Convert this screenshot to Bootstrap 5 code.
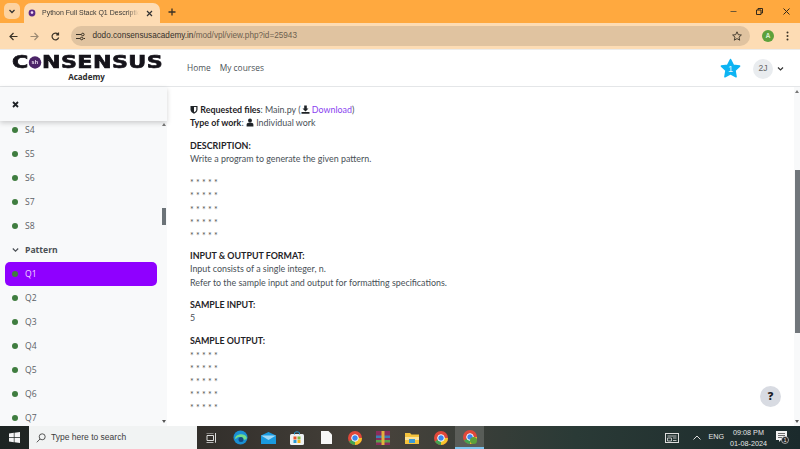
<!DOCTYPE html>
<html lang="en">
<head>
  <meta charset="UTF-8">
  <meta name="viewport" content="width=device-width, initial-scale=1">
  <title>Python Full Stack Q1 Description</title>
  <link href="https://cdn.jsdelivr.net/npm/bootstrap@5.3.3/dist/css/bootstrap.min.css" rel="stylesheet">
  <style>
    html, body { height: 449px; overflow: hidden; }
    body { font-family: "Open Sans", "Noto Sans", sans-serif; color: #3f4449; background: #fff; }
    svg { display: block; flex: none; }

    .app-shell { width: 800px; height: 449px; }

    .tab-strip { height: 23px; background: #ffa93f; padding-left: 4px; }
    .tab-list-btn { width: 16px; height: 16px; background: #fdd3a0; border-radius: 5px; margin-right: 4px; margin-top: 3px; }
    .chrome-tab { width: 136px; height: 20px; margin-top: 3px; background: #fddcb4; border-radius: 7px 7px 0 0; padding: 0 7px 0 4px; font-size: 7px; color: #3b3a38; white-space: nowrap; font-family: "Liberation Sans", sans-serif; }
    .tab-title { width: 97px; margin-left: 6px; overflow: visible; -webkit-mask-image: linear-gradient(90deg, #000 88%, transparent 100%); mask-image: linear-gradient(90deg, #000 88%, transparent 100%); }
    .win-btns { margin-left: auto; gap: 19.5px; padding-right: 10.5px; height: 23px; }

    .tool-strip { height: 27px; background: #fddcb4; padding: 0 11px 0 8.5px; border-bottom: 1px solid #ececec; gap: 12px; }
    .url-pill { width: 679px; height: 20px; background: #e0c3a0; border-radius: 10px; margin-left: -1px; padding: 0 8px 0 5px; font-size: 8.2px; font-family: "Liberation Sans", sans-serif; color: #6d5f4f; }
    .url-host { color: #35302a; }
    .avatar-a { width: 12px; height: 12px; border-radius: 50%; background: #5da13a; color: #d8efcf; font-size: 6.5px; font-weight: 700; }

    .site-nav { height: 37px; border-bottom: 1px solid #e4e6e8; padding: 1px 16px 0 0; background: #fff; }
    .logo-box { width: 187px; padding-left: 12px; }
    .logo-word { font-family: "DejaVu Sans", sans-serif; font-weight: 700; font-size: 17.6px; line-height: 15px; color: #15131a; -webkit-text-stroke: .7px #15131a; letter-spacing: .35px; transform: scaleX(1.26); transform-origin: left; white-space: nowrap; }
    .logo-sub { width: 149px; font-size: 8px; font-weight: 700; line-height: 11px; color: #2b2b2b; text-align: center; margin-top: 1px; }
    .nav-text { font-size: 8.4px; color: #4c5257; margin-right: 9px; }
    .user-chip { width: 20px; height: 20px; border-radius: 50%; background: #e9ecef; font-family: "Liberation Sans", sans-serif; font-size: 8.5px; color: #666; margin: 0 4px 0 12.5px; }

    .page-body { height: 339px; }
    .side-col { width: 167px; background: #f8f9fa; position: relative; }
    .side-head { height: 34px; background: #f8f9fa; padding-left: 12px; box-shadow: 0 2px 5px rgba(0,0,0,.18); position: relative; z-index: 2; }
    .side-list { padding: 0 10px 0 5px; margin-top: -3px; overflow: hidden; height: 308px; }
    .side-row { height: 24px; font-size: 8.6px; color: #5b6166; padding-left: 7px; border-radius: 5px; }
    .dot-done { width: 6px; height: 6px; border-radius: 50%; background: #3f7d3f; margin-right: 7px; }
    .chev-ico { margin-right: 6px; }
    .side-row.is-active { background: #8f00ff; color: #f3d9ff; }
    .side-row.is-section { font-weight: 700; color: #4a4f54; }
    .side-thumb { position: absolute; left: 162px; top: 121px; width: 4px; height: 17px; background: #6c7378; }
    .side-arrow-up { position: absolute; left: 162px; top: 36px; }
    .side-arrow-down { position: absolute; left: 162px; top: 333px; }

    .content-col { padding: 16px 0 0 23px; font-family: Lato, "Open Sans", sans-serif; font-size: 8.9px; line-height: 13.100px; color: #495057; position: relative; overflow: hidden; }
    .content-col b { color: #1f2327; font-weight: 700; }
    .content-col p { margin: 0; }
    .content-col .gap-after { margin-bottom: 9.500px; }
    .star-line { font-size: 8.800px; height: 13.100px; line-height: 18px; color: #555; }
    .dl-link { color: #8a3ff0; text-decoration: none; }
    .inline-ico { display: inline-block; vertical-align: -1px; }
    .page-bar { width: 6px; background: #f8f9fa; position: relative; }
    .page-thumb { position: absolute; left: .5px; top: 83px; width: 5px; height: 163px; background: #71767b; }
    .page-arrow-up { position: absolute; left: 1px; top: 3px; }
    .page-arrow-down { position: absolute; left: 1px; top: 333px; }
    .help-btn { position: absolute; left: 760px; top: 386px; width: 21px; height: 21px; border-radius: 50%; background: #d8dbe2; color: #1d2125; font-size: 11px; font-weight: 800; z-index: 3; }

    .task-strip { height: 23px; background: linear-gradient(90deg, #1d2422 0%, #322f2b 25%, #47423b 48%, #2a3a36 72%, #1b2a2c 100%); color: #e6e6e6; }
    .start-cell { width: 29px; }
    .search-box { width: 168px; height: 23px; background: #f1f3f3; color: #3c3c3c; font-size: 8.5px; padding-left: 7px; font-family: "Liberation Sans", sans-serif; }
    .search-ico { margin-right: 5px; }
    .task-cell { width: 28.700px; height: 23px; }
    .task-cell.is-open { background: rgba(255,255,255,.16); border-bottom: 2px solid #7dc3ee; }
    .tray-cell { font-family: "Liberation Sans", sans-serif; font-size: 7.200px; padding-right: 11px; }
    .news-ico { margin-right: 14px; }
    .up-ico { margin-right: 7.500px; }
    .clock-cell { text-align: center; line-height: 11px; width: 44px; font-size: 7.200px; margin: 0 5.500px 0 2.500px; }
  </style>
</head>
<body>
  <div class="app-shell d-flex flex-column position-relative">

    <div class="tab-strip d-flex align-items-start">
      <div class="tab-list-btn d-flex align-items-center justify-content-center">
        <svg width="8" height="8" viewBox="0 0 8 8"><path d="M1.500 3 4 5.500 6.500 3" fill="none" stroke="#333" stroke-width="1.300"/></svg>
      </div>
      <div class="chrome-tab d-flex align-items-center">
        <svg width="8" height="8" viewBox="0 0 8 8"><circle cx="4" cy="4" r="3.400" fill="#5b2a86"/><circle cx="4" cy="3.600" r="1.300" fill="#f2d9f2"/></svg>
        <div class="tab-title">Python Full Stack Q1 Descriptio</div>
        <svg class="ms-auto" width="7" height="7" viewBox="0 0 7 7"><path d="M1 1l5 5M6 1 1 6" stroke="#333" stroke-width="1.200"/></svg>
      </div>
      <svg class="ms-2 mt-2" width="8" height="8" viewBox="0 0 8 8"><path d="M4 .5v7M.5 4h7" stroke="#3a3226" stroke-width="1.300"/></svg>
      <div class="win-btns d-flex align-items-center">
        <svg width="7" height="7" viewBox="0 0 7 7"><path d="M.5 3.500h6" stroke="#6b5636"/></svg>
        <svg width="7" height="7" viewBox="0 0 7 7"><path d="M.5 2h4.500v4.500h-4.500zM2 2V.5h4.500V5H5" fill="none" stroke="#33291a"/></svg>
        <svg width="7" height="7" viewBox="0 0 7 7"><path d="M.5.5l6 6M6.500.5l-6 6" stroke="#33291a"/></svg>
      </div>
    </div>

    <div class="tool-strip d-flex align-items-center">
      <svg width="9" height="9" viewBox="0 0 9 9"><path d="M8.500 4.500H1M4.500 1 1 4.500 4.500 8" fill="none" stroke="#3a3226" stroke-width="1.200"/></svg>
      <svg width="9" height="9" viewBox="0 0 9 9"><path d="M.5 4.500H8M4.500 1 8 4.500 4.500 8" fill="none" stroke="#9c8a73" stroke-width="1.200"/></svg>
      <svg width="9" height="9" viewBox="0 0 9 9"><path d="M7.700 5.500A3.400 3.400 0 1 1 7 2.200M7.500.6v2.300H5.200" fill="none" stroke="#3a3226" stroke-width="1.200"/></svg>
      <div class="url-pill d-flex align-items-center">
        <svg class="me-2" width="9" height="9" viewBox="0 0 9 9"><path d="M0 2.500h5M7.500 6.500h1.500M0 6.500h4" stroke="#3a3226"/><circle cx="6.800" cy="2.500" r="1.300" fill="none" stroke="#3a3226"/><circle cx="5.700" cy="6.500" r="1.300" fill="none" stroke="#3a3226"/></svg>
        <span><span class="url-host">dodo.consensusacademy.in</span>/mod/vpl/view.php?id=25943</span>
        <svg class="ms-auto" width="10" height="10" viewBox="0 0 10 10"><path d="M5 .8 6.300 3.700 9.400 4 7 6.100 7.700 9.200 5 7.600 2.300 9.200 3 6.100.6 4 3.700 3.700z" fill="none" stroke="#3a3226" stroke-width=".9"/></svg>
      </div>
      <div class="avatar-a d-flex align-items-center justify-content-center ms-auto">A</div>
      <svg width="3" height="10" viewBox="0 0 3 10"><circle cx="1.500" cy="1.500" r="1" fill="#3a3226"/><circle cx="1.500" cy="5" r="1" fill="#3a3226"/><circle cx="1.500" cy="8.500" r="1" fill="#3a3226"/></svg>
    </div>

    <nav class="site-nav d-flex align-items-center">
      <div class="logo-box">
        <div class="logo-word d-flex align-items-center">C<svg width="10.500" height="13" viewBox="0 0 16 16" preserveAspectRatio="none"><circle cx="8" cy="8" r="7.600" fill="#4b2468"/><text x="8" y="10.300" font-size="6.500" text-anchor="middle" fill="#f4e8f7" font-family="Liberation Sans" font-weight="700" stroke="none">sh</text></svg>NSENSUS</div>
        <div class="logo-sub">Academy</div>
      </div>
      <span class="nav-text">Home</span>
      <span class="nav-text">My courses</span>
      <svg class="ms-auto" width="21" height="21" viewBox="0 0 21 21"><path d="M10.500 1.500 13.300 7.200 19.600 8.100 15 12.500 16.100 18.800 10.500 15.800 4.900 18.800 6 12.500 1.400 8.100 7.700 7.200z" fill="#0db4f3" stroke="#0db4f3" stroke-width="1.500" stroke-linejoin="round"/><text x="10.500" y="14" font-size="9" text-anchor="middle" fill="#e8f8ff" font-family="Liberation Sans">1</text></svg>
      <div class="user-chip d-flex align-items-center justify-content-center">2J</div>
      <svg width="7" height="7" viewBox="0 0 7 7"><path d="M1 2.500 3.500 5 6 2.500" fill="none" stroke="#333" stroke-width="1.200"/></svg>
    </nav>

    <div class="page-body d-flex">
      <aside class="side-col d-flex flex-column">
        <div class="side-head d-flex align-items-center">
          <svg width="7" height="7" viewBox="0 0 7 7"><path d="M1 1l5 5M6 1 1 6" stroke="#1d2125" stroke-width="1.800"/></svg>
        </div>
        <div class="side-list" id="side-list"></div>
        <svg class="side-arrow-up" width="4" height="3" viewBox="0 0 4 3"><path d="M2 0 4 3H0z" fill="#777"/></svg>
        <div class="side-thumb"></div>
        <svg class="side-arrow-down" width="4" height="3" viewBox="0 0 4 3"><path d="M2 3 4 0H0z" fill="#555"/></svg>
      </aside>

      <main class="content-col flex-grow-1">
        <p><svg class="inline-ico" width="8" height="9" viewBox="0 0 8 9"><path d="M.5 1h7v3.500C7.500 6.800 5.500 8 4 8.700 2.500 8 .5 6.800.5 4.500z" fill="#1f2327"/><path d="M4 2v5.300C5.200 6.600 6.300 5.700 6.300 4.400V2z" fill="#fff"/></svg> <b>Requested files</b>: Main.py (<svg class="inline-ico" width="9" height="9" viewBox="0 0 9 9"><path d="M3.200.5h2.600v3h1.700L4.500 6.500 1.500 3.500h1.700zM.5 7h8v1.700h-8z" fill="#1f2327"/></svg> <a href="#" class="dl-link">Download</a>)</p>
        <p class="gap-after"><b>Type of work</b>: <svg class="inline-ico" width="8" height="9" viewBox="0 0 8 9"><circle cx="4" cy="2.400" r="2" fill="#1f2327"/><path d="M.6 8.500V6.800C.6 5.300 1.800 4.600 4 4.600s3.400.7 3.400 2.200v1.700z" fill="#1f2327"/></svg> Individual work</p>
        <p><b>DESCRIPTION:</b></p>
        <p class="gap-after">Write a program to generate the given pattern.</p>
        <div class="star-line">* * * * *</div>
        <div class="star-line">* * * * *</div>
        <div class="star-line">* * * * *</div>
        <div class="star-line">* * * * *</div>
        <div class="star-line gap-after">* * * * *</div>
        <p><b>INPUT &amp; OUTPUT FORMAT:</b></p>
        <p>Input consists of a single integer, n.</p>
        <p class="gap-after">Refer to the sample input and output for formatting specifications.</p>
        <p><b>SAMPLE INPUT:</b></p>
        <p class="gap-after">5</p>
        <p><b>SAMPLE OUTPUT:</b></p>
        <div class="star-line">* * * * *</div>
        <div class="star-line">* * * * *</div>
        <div class="star-line">* * * * *</div>
        <div class="star-line">* * * * *</div>
        <div class="star-line">* * * * *</div>
      </main>

      <div class="page-bar">
        <svg class="page-arrow-up" width="4" height="3" viewBox="0 0 4 3"><path d="M2 0 4 3H0z" fill="#777"/></svg>
        <div class="page-thumb"></div>
        <svg class="page-arrow-down" width="4" height="3" viewBox="0 0 4 3"><path d="M2 3 4 0H0z" fill="#555"/></svg>
      </div>
    </div>

    <div class="help-btn d-flex align-items-center justify-content-center">?</div>

    <footer class="task-strip d-flex align-items-center">
      <div class="start-cell d-flex justify-content-center">
        <svg width="11" height="11" viewBox="0 0 11 11"><path d="M0 1.500 4.800.8v4.400H0zM5.500.7 11 0v5.200H5.500zM0 5.900h4.800v4.300L0 9.500zM5.500 5.900H11V11l-5.500-.8z" fill="#f4f4f4"/></svg>
      </div>
      <div class="search-box d-flex align-items-center">
        <svg class="search-ico" width="10" height="10" viewBox="0 0 10 10"><circle cx="6.200" cy="3.800" r="3" fill="none" stroke="#444" stroke-width=".9"/><path d="M4 6 .8 9.300" stroke="#444" stroke-width=".9"/></svg>
        Type here to search
      </div>
      <div class="d-flex align-items-center">
        <div class="task-cell d-flex align-items-center justify-content-center">
          <svg width="11" height="10" viewBox="0 0 11 10"><path d="M1 2.500h6.500v5H1zM.5 0h7M.5 9.700h7M9.500 0v9.700" fill="none" stroke="#eee" stroke-width=".9"/></svg>
        </div>
        <div class="task-cell d-flex align-items-center justify-content-center">
          <svg width="15" height="15" viewBox="0 0 15 15"><circle cx="7.500" cy="7.500" r="7" fill="#1a8fd4"/><path d="M2 8.500C2.500 3.500 12 2.500 13.800 7.500c.4 2-2 2.500-3.800 2C9 7 5 5.500 3 9z" fill="#6fdc8c"/><circle cx="8" cy="9.500" r="2.500" fill="#134a83"/></svg>
        </div>
        <div class="task-cell d-flex align-items-center justify-content-center">
          <svg width="15" height="12" viewBox="0 0 15 12"><path d="M0 3.500 7.500 0 15 3.500V12H0z" fill="#1a9ae0"/><path d="M0 3.500 7.500 8 15 3.500" fill="#9fd8f5"/></svg>
        </div>
        <div class="task-cell d-flex align-items-center justify-content-center">
          <svg width="14" height="14" viewBox="0 0 14 14"><rect y="3" width="14" height="11" rx="1.500" fill="#eef1f3"/><path d="M4.500 3.500V2C4.500.4 9.500.4 9.500 2v1.500" fill="none" stroke="#2a9bd8"/><rect x="3.500" y="5.500" width="3" height="3" fill="#e8522b"/><rect x="7.500" y="5.500" width="3" height="3" fill="#7fb93c"/><rect x="3.500" y="9" width="3" height="3" fill="#2a9bd8"/><rect x="7.500" y="9" width="3" height="3" fill="#f4b41a"/></svg>
        </div>
        <div class="task-cell d-flex align-items-center justify-content-center">
          <svg width="11" height="13" viewBox="0 0 11 13"><path d="M0 0h7.500L11 3.500V13H0z" fill="#f7f7f7"/></svg>
        </div>
        <div class="task-cell d-flex align-items-center justify-content-center">
          <svg width="14" height="14" viewBox="0 0 14 14"><circle cx="7" cy="7" r="7" fill="#e0483a"/><path d="M7 7 1 10.500A7 7 0 0 0 7 14z" fill="#43a550"/><path d="M7 7h7a7 7 0 0 1-7 7z" fill="#f6c52c"/><circle cx="7" cy="7" r="3.300" fill="#3c86ee" stroke="#fff"/></svg>
        </div>
        <div class="task-cell d-flex align-items-center justify-content-center">
          <svg width="14" height="14" viewBox="0 0 14 14"><rect width="14" height="14" fill="#8a2d5c"/><rect y="4.500" width="14" height="2.500" fill="#3d7fb5"/><rect y="9" width="14" height="2.500" fill="#59a14a"/><rect x="5.500" width="3" height="14" fill="#e2b23c"/></svg>
        </div>
        <div class="task-cell d-flex align-items-center justify-content-center">
          <svg width="14" height="12" viewBox="0 0 14 12"><path d="M0 1h5l1.500 1.500H14V12H0z" fill="#f4c33d"/><rect y="5" width="14" height="3" fill="#fbe39a"/><rect x="4" y="7" width="6" height="4" fill="#3a9ad9"/></svg>
        </div>
        <div class="task-cell d-flex align-items-center justify-content-center">
          <svg width="14" height="14" viewBox="0 0 14 14"><circle cx="7" cy="7" r="7" fill="#e0483a"/><path d="M7 7 1 10.500A7 7 0 0 0 7 14z" fill="#43a550"/><path d="M7 7h7a7 7 0 0 1-7 7z" fill="#f6c52c"/><circle cx="7" cy="7" r="3.300" fill="#3c86ee" stroke="#fff"/></svg>
        </div>
        <div class="task-cell is-open d-flex align-items-center justify-content-center">
          <svg width="14" height="14" viewBox="0 0 14 14"><circle cx="7" cy="7" r="7" fill="#e0483a"/><path d="M7 7 1 10.500A7 7 0 0 0 7 14z" fill="#43a550"/><path d="M7 7h7a7 7 0 0 1-7 7z" fill="#f6c52c"/><circle cx="7" cy="7" r="3.300" fill="#3c86ee" stroke="#fff"/><circle cx="10.500" cy="10.500" r="3.500" fill="#5da13a"/></svg>
        </div>
      </div>
      <div class="tray-cell d-flex align-items-center ms-auto">
        <svg class="news-ico" width="14" height="10" viewBox="0 0 14 10"><rect x=".5" y=".5" width="13" height="9" fill="none" stroke="#ddd"/><path d="M2.500 3h9M2.500 5h4v3h-4zM8 5h3.500M8 7.500h3.500" fill="none" stroke="#ddd" stroke-width=".8"/></svg>
        <svg class="up-ico" width="8" height="5" viewBox="0 0 8 5"><path d="M.5 4.500 4 1l3.500 3.500" fill="none" stroke="#ddd"/></svg>
        <span>ENG</span>
        <div class="clock-cell">09:08 PM<br>01-08-2024</div>
        <svg width="13" height="13" viewBox="0 0 13 13"><path d="M0 0h11v9H5L3 11V9H0z" fill="#f2f2f2"/><path d="M2 2.500h7M2 4.500h7M2 6.500h4" stroke="#333" stroke-width=".7"/><circle cx="9" cy="9" r="3.500" fill="#222" stroke="#ddd" stroke-width=".7"/><text x="9" y="11" font-size="5.500" text-anchor="middle" fill="#eee" font-family="Liberation Sans">1</text></svg>
      </div>
    </footer>
  </div>

  <script src="https://cdn.jsdelivr.net/npm/bootstrap@5.3.3/dist/js/bootstrap.bundle.min.js"></script>
  <script>
    const sideRows = [
      ['S4'], ['S5'], ['S6'], ['S7'], ['S8'],
      ['Pattern', 'is-section'],
      ['Q1', 'is-active'],
      ['Q2'], ['Q3'], ['Q4'], ['Q5'], ['Q6'], ['Q7']
    ];
    const chevron = '<svg class="chev-ico" width="7" height="6" viewBox="0 0 7 6"><path d="M.8 1.500 3.500 4.200 6.200 1.500" fill="none" stroke="#4a4f54" stroke-width="1.200"/></svg>';
    document.getElementById('side-list').innerHTML = sideRows.map(function (row) {
      const mark = row[1] === 'is-section' ? chevron : '<span class="dot-done"></span>';
      return '<div class="side-row d-flex align-items-center ' + (row[1] || '') + '">' + mark + row[0] + '</div>';
    }).join('');
  </script>
</body>
</html>
